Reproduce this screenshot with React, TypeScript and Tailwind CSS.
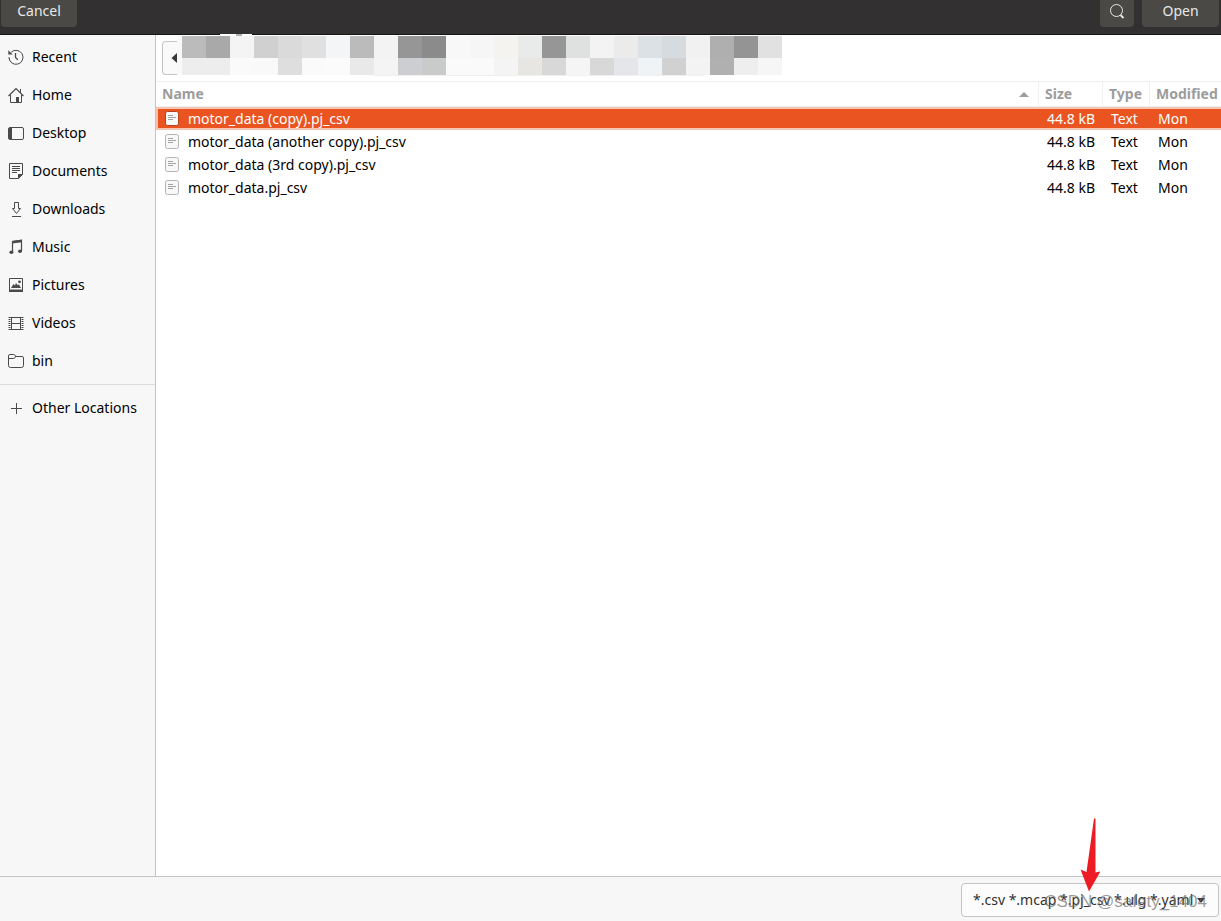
import { type ReactNode } from 'react'

function Icon({ children }: { children: ReactNode }) {
  return (
    <svg
      viewBox="0 0 16 16"
      width="16"
      height="16"
      fill="none"
      stroke="#4a4a4a"
      strokeWidth="1"
      className="shrink-0"
      aria-hidden="true"
    >
      {children}
    </svg>
  )
}

const PLACES = [
  {
    name: 'Recent',
    icon: (
      <Icon>
        <path d="M3.2 3.2A7 7 0 1 1 1 8.5" />
        <path d="M1 8.5A7 7 0 0 0 3 13" strokeDasharray="1 1.2" />
        <path d="M0.3 1.2V5.6H4.8Z" fill="#4a4a4a" stroke="none" />
        <path d="M7.5 4V8.5L9.8 10.8" strokeWidth="1.3" />
      </Icon>
    ),
  },
  {
    name: 'Home',
    icon: (
      <Icon>
        <path d="M0.5 9L8 1.5L15.5 9" strokeWidth="1.2" />
        <path d="M2.5 8V15.5H13.5V8M12.5 2V5.5" />
        <path d="M8 10H11V15.5H8Z" fill="#4a4a4a" stroke="none" />
      </Icon>
    ),
  },
  {
    name: 'Desktop',
    icon: (
      <Icon>
        <rect x="0.5" y="2.5" width="15" height="12" rx="1.5" />
        <path d="M1 3H4V14H1Z" fill="#4a4a4a" stroke="none" />
      </Icon>
    ),
  },
  {
    name: 'Documents',
    icon: (
      <Icon>
        <path d="M1.5 0.5H14.5V11.5L10.5 15.5H1.5Z" />
        <path d="M15 11H10V16Z" fill="#4a4a4a" stroke="none" />
        <path d="M4 3.5H12M4 5.5H12M4 7.5H12M4 9.5H9" />
      </Icon>
    ),
  },
  {
    name: 'Downloads',
    icon: (
      <Icon>
        <path d="M6.5 1.5H10.5V7.5H12.5L8.5 12.5L4.5 7.5H6.5Z" />
        <path d="M4 15.5H13" />
      </Icon>
    ),
  },
  {
    name: 'Music',
    icon: (
      <Icon>
        <path d="M4.5 13V2.5L13.5 1.2V12" strokeWidth="1.2" />
        <path d="M4 2L14 0.8V3.2L4 4.4Z" fill="#4a4a4a" stroke="none" />
        <ellipse cx="3.4" cy="13.2" rx="2" ry="1.8" fill="#4a4a4a" stroke="none" />
        <ellipse cx="12" cy="12.2" rx="2" ry="1.8" fill="#4a4a4a" stroke="none" />
      </Icon>
    ),
  },
  {
    name: 'Pictures',
    icon: (
      <Icon>
        <path d="M1.5 1.5H14.5V14.5H1.5Z" />
        <path d="M1 12.5H15V15H1Z" fill="#4a4a4a" stroke="none" />
        <path d="M3 11L5.5 7L7 8.5L8 6L9.5 8L11 7.5L13 11Z" fill="#4a4a4a" stroke="none" />
        <circle cx="11.5" cy="4.8" r="1.4" fill="#4a4a4a" stroke="none" />
      </Icon>
    ),
  },
  {
    name: 'Videos',
    icon: (
      <Icon>
        <path d="M1 2.5H15M1 14.5H15M3.5 2V15M12.5 2V15M3.5 8.5H12.5" />
        <path d="M1.5 2V15M14.5 2V15" strokeWidth="2" strokeDasharray="1 1" />
      </Icon>
    ),
  },
  {
    name: 'bin',
    icon: (
      <Icon>
        <path d="M0.5 12.5V3Q0.5 1.5 2 1.5H5.5Q7 1.5 7.5 3V3.5H14Q15.5 3.5 15.5 5V12.5Q15.5 14.5 13.5 14.5H2.5Q0.5 14.5 0.5 12.5Z" />
        <path d="M0.5 6Q0.5 5.5 2 5.5H5.5Q7 5.5 7.5 3.5" />
      </Icon>
    ),
  },
]

const FILES = [
  { name: 'motor_data (copy).pj_csv', selected: true },
  { name: 'motor_data (another copy).pj_csv', selected: false },
  { name: 'motor_data (3rd copy).pj_csv', selected: false },
  { name: 'motor_data.pj_csv', selected: false },
]

// censored path: two rows of blocks
const MOSAIC_TOP = [
  '#bbbbbb', '#a9a9a9', '#f4f4f4', '#d0d0d0', '#dadada', '#e0e0e0', '#f3f5f7', '#bbbbbb', '#f3f3f3',
  '#969696', '#8b8b8b', '#f8f8f8', '#f6f6f6', '#f4f3f0', '#e9eaea', '#969696', '#dee1e0', '#f3f3f3',
  '#ebebeb', '#dce1e5', '#d6dbdf', '#f1f1f1', '#afafaf', '#949494', '#e1e1e1',
]
const MOSAIC_BOTTOM = [
  '#ededed', '#ededed', '#fafafa', '#f9f9f9', '#dedede', '#fafafa', '#fbfbfb', '#e9e9e9', '#f4f4f4',
  '#cdced1', '#c8cbca', '#fafafa', '#fafafa', '#f4f4f4', '#e8e6e3', '#d8d8d8', '#f5f5f5', '#d8d8d8',
  '#e4e6e9', '#f0f3f6', '#d1d1d1', '#f3f3f3', '#b0b0b0', '#eeeeee', '#f6f6f6',
]

function FileIcon({ selected }: { selected: boolean }) {
  return (
    <svg viewBox="0 0 16 16" width="16" height="16" fill="none" className="shrink-0" aria-hidden="true">
      <rect x="1.5" y="0.5" width="13" height="14" rx="2" fill="#f8f8f8" stroke={selected ? '#b5431c' : '#b4b4b4'} />
      <path d="M4 4.5H9M4 6.5H12M4 8.5H9" stroke="#a4a4a4" />
    </svg>
  )
}

export default function App() {
  return (
    <div className="flex min-h-screen flex-col bg-white font-['Noto_Sans',sans-serif] text-sm text-black">
      <header className="flex h-[35px] items-start border-b border-[#161514] bg-[#323030] pr-[2px] pl-px text-[#e8e8e6]">
        <button className="h-[27px] w-[76px] rounded-b bg-[#4a4946] pb-1.5">Cancel</button>
        <button aria-label="Search" className="ml-auto flex h-[27px] w-[34px] justify-center rounded-b bg-[#4a4946] pt-1">
          <svg viewBox="0 0 16 16" width="16" height="16" fill="none" stroke="#e8e8e6" aria-hidden="true">
            <circle cx="7.5" cy="6.5" r="6" />
            <path d="M11.5 11L14.5 14" strokeWidth="1.8" />
          </svg>
        </button>
        <button className="ml-2 h-[27px] w-[77px] rounded-b bg-[#4a4946] pb-1.5">Open</button>
      </header>

      <div className="flex flex-1">
        <nav className="w-[156px] shrink-0 border-r border-[#c4c4c4] bg-[#f7f7f7] pt-[3px]">
          {PLACES.map((p) => (
            <a key={p.name} href="#" className="flex h-[38px] items-center gap-2 pl-2">
              {p.icon}
              {p.name}
            </a>
          ))}
          <hr className="my-1 border-[#dcdcdc]" />
          <a href="#" className="flex h-[38px] items-center gap-2 pl-2 whitespace-nowrap">
            <Icon>
              <path d="M8.5 3V14M3 8.5H14" />
            </Icon>
            Other Locations
          </a>
        </nav>

        <main className="min-w-0 flex-1">
          <div className="relative flex h-[46px] pl-[6px]">
            <button
              aria-label="Back"
              className="mt-[6px] flex h-[34px] w-[15px] items-center justify-end rounded-l border border-r-0 border-[#c4c4c4] bg-[#fafafa]"
            >
              <svg viewBox="0 0 6 10" width="6" height="10" fill="#3a3a3a" aria-hidden="true">
                <path d="M6 0V10L0.5 5Z" />
              </svg>
            </button>
            <div className="mt-px h-[39px] w-[5px] bg-[#f9f9f9]" />
            <div className="mt-px">
              <div className="flex h-[22px]">
                {MOSAIC_TOP.map((c, i) => (
                  <div key={i} className="w-6" style={{ backgroundColor: c }} />
                ))}
              </div>
              <div className="flex h-[17px]">
                {MOSAIC_BOTTOM.map((c, i) => (
                  <div key={i} className="w-6" style={{ backgroundColor: c }} />
                ))}
              </div>
              <div className="ml-48 h-px w-[330px] bg-[#f0f0f0]" />
            </div>
            <div className="absolute -top-px left-16 flex h-0.5 w-8 bg-white pl-4">
              <div className="w-1.5 bg-[#b0b0b0]" />
            </div>
          </div>

          <table className="w-full table-fixed border-separate border-spacing-0 text-left whitespace-nowrap">
            <colgroup>
              <col />
              <col className="w-[64px]" />
              <col className="w-[47px]" />
              <col className="w-[71px]" />
            </colgroup>
            <thead className="leading-6 text-[#9c9c9c]">
              <tr>
                <th className="border-y border-r border-[#f0f0f0] p-0 pl-[6px]">
                  <button className="flex w-full items-center justify-between pr-[9px] font-bold">
                    Name
                    <svg viewBox="0 0 10 5" width="10" height="5" fill="#9c9c9c" aria-hidden="true">
                      <path d="M0 5L5 0L10 5Z" />
                    </svg>
                  </button>
                </th>
                <th className="border-y border-r border-[#f0f0f0] p-0 pl-[6px]">
                  <button className="font-bold">Size</button>
                </th>
                <th className="border-y border-r border-[#f0f0f0] p-0 pl-[6px]">
                  <button className="font-bold">Type</button>
                </th>
                <th className="border-y border-[#f0f0f0] p-0 pl-[6px]">
                  <button className="font-bold">Modified</button>
                </th>
              </tr>
            </thead>
            <tbody className="leading-[19px]">
              {FILES.map((f) => (
                <tr
                  key={f.name}
                  aria-selected={f.selected}
                  className={f.selected ? 'border-[#f5c4b2] bg-[#e95420] text-white' : 'border-transparent'}
                >
                  <td className="border-y-2 border-l-2 border-inherit p-0 pl-[6px]">
                    <div className="flex h-[19px] items-center gap-2">
                      <FileIcon selected={f.selected} />
                      {f.name}
                    </div>
                  </td>
                  <td className="border-y-2 border-inherit p-0 pl-2">44.8 kB</td>
                  <td className="border-y-2 border-inherit p-0 pl-2">Text</td>
                  <td className="border-y-2 border-inherit p-0 pl-2">Mon</td>
                </tr>
              ))}
            </tbody>
          </table>
        </main>
      </div>

      <footer className="relative flex h-[45px] items-start justify-end border-t border-[#c4c4c4] bg-[#f7f7f7] pt-[6px] pr-[2px]">
        <select
          aria-label="File filter"
          className="h-[34px] w-[258px] appearance-none rounded border border-[#c4c4c4] bg-[#fcfcfc] pl-[11px] text-[#303030]"
        >
          <option>*.csv *.mcap *.pj_csv *.ulg *.yaml</option>
        </select>
        <svg viewBox="0 0 8 5" width="8" height="5" fill="#303030" className="absolute top-[21px] right-4" aria-hidden="true">
          <path d="M0 0H8L4 5Z" />
        </svg>
        <span className="pointer-events-none absolute top-[13px] right-[14px] font-['Liberation_Sans',sans-serif] text-[17px] leading-6 text-[#707070]/70">
          CSDN @safety_1404
        </span>
        <svg
          viewBox="0 0 20 74"
          width="20"
          height="74"
          fill="#ed1c24"
          className="pointer-events-none absolute right-[121px] bottom-[29px]"
          aria-hidden="true"
        >
          <path d="M14 0.5L15.5 0.5L15.5 54.5L20.5 53.5L9 73.5L0.5 51.5L6.5 54Z" />
        </svg>
      </footer>
    </div>
  )
}
